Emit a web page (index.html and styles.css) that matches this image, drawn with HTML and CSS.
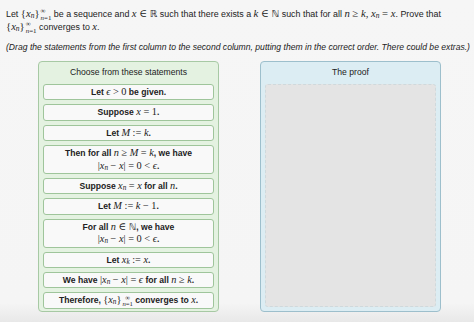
FILE: index.html
```html
<!DOCTYPE html>
<html>
<head lang="en">
    <meta charset="UTF-8">
    <title>Order the proof</title>
    <link rel="stylesheet" href="styles.css">
</head>
<body>
    <p class="question">
        Let <span class="m">{<i>x</i><sub>n</sub>}<span class="lim"><span>∞</span><span><i>n</i>=1</span></span></span> be a sequence and <span class="m"><i>x</i> ∈ <span class="bb">ℝ</span></span> such that there exists a <span class="m"><i>k</i> ∈ <span class="bb">ℕ</span></span> such that for all <span class="m"><i>n</i> ≥ <i>k</i>, <i>x</i><sub>n</sub> = <i>x</i></span>. Prove that<br>
        <span class="m">{<i>x</i><sub>n</sub>}<span class="lim"><span>∞</span><span><i>n</i>=1</span></span></span> converges to <span class="m"><i>x</i></span>.
    </p>
    <p class="hint">(Drag the statements from the first column to the second column, putting them in the correct order. There could be extras.)</p>

    <div class="columns">
        <div class="col col-source">
            <div class="col-title">Choose from these statements</div>
            <ul class="blocks">
                <li>Let <span class="m"><i>ϵ</i> &gt; 0</span> be given.</li>
                <li>Suppose <span class="m"><i>x</i> = 1</span>.</li>
                <li>Let <span class="m"><i>M</i> := <i>k</i></span>.</li>
                <li>Then for all <span class="m"><i>n</i> ≥ <i>M</i> = <i>k</i></span>, we have<br><span class="m">|<i>x</i><sub>n</sub> − <i>x</i>| = 0 &lt; <i>ϵ</i></span>.</li>
                <li>Suppose <span class="m"><i>x</i><sub>n</sub> = <i>x</i></span> for all <span class="m"><i>n</i></span>.</li>
                <li>Let <span class="m"><i>M</i> := <i>k</i> − 1</span>.</li>
                <li>For all <span class="m"><i>n</i> ∈ <span class="bb">ℕ</span></span>, we have<br><span class="m">|<i>x</i><sub>n</sub> − <i>x</i>| = 0 &lt; <i>ϵ</i></span>.</li>
                <li>Let <span class="m"><i>x</i><sub>k</sub> := <i>x</i></span>.</li>
                <li>We have <span class="m">|<i>x</i><sub>n</sub> − <i>x</i>| = <i>ϵ</i></span> for all <span class="m"><i>n</i> ≥ <i>k</i></span>.</li>
                <li>Therefore, <span class="m">{<i>x</i><sub>n</sub>}<span class="lim"><span>∞</span><span><i>n</i>=1</span></span></span> converges to <span class="m"><i>x</i></span>.</li>
            </ul>
        </div>
        <div class="col col-proof">
            <div class="col-title">The proof</div>
            <div class="dropzone"></div>
        </div>
    </div>
</body>
</html>
```

FILE: styles.css
```css
body,p,ul { margin: 0; padding: 0;}
html { background: #e8e8e8;}
body {
    font-family: "Liberation Sans", Arial, sans-serif;
    font-size: 8.6px;
    color: #222;
    padding: 8px 6px 0;
    height: 322px;
    box-sizing: border-box;
    overflow: hidden;
    background: linear-gradient(#f6f6f6 0, #f5f5f5 303px, #e8e8e8 322px);
}
li { list-style: none;}

.m {
    font-family: "Liberation Serif", "DejaVu Serif", serif;
    font-size: 1.2em;
    line-height: 1;
    white-space: nowrap;
    font-weight: normal;
}
.m i { font-style: italic;}
.m sub { font-size: 0.7em; font-style: italic; vertical-align: -0.2em; line-height: 0;}
.bb { font-family: "DejaVu Sans", sans-serif; font-size: 0.9em; line-height: 1;}
.lim {
    display: inline-flex;
    flex-direction: column;
    vertical-align: 0.55em;
    font-size: 0.65em;
    line-height: 0.95em;
    margin: -8px 0 -8px 1px;
}

.question { font-size: 8.9px; line-height: 13px;}
.hint { font-style: italic; font-size: 8.6px; line-height: 12px; margin: 7px -6px 0 0; white-space: nowrap;}

.columns {
    display: flex;
    gap: 41px;
    margin: 8px 0 0 32px;
}
.col {
    width: 181px;
    height: 251px;
    box-sizing: border-box;
    border: 1px solid #a7c9a4;
    border-radius: 4px;
    padding: 0 4px;
}
.col-source { background: #e4f2e1;}
.col-proof { background: #dcedf3; border-color: #9dbfcc;}
.col-title {
    text-align: center;
    height: 22px;
    line-height: 21px;
}
.blocks li {
    background: #f9f9f9;
    border: 1px solid #9fc59b;
    border-radius: 3px;
    text-align: center;
    font-weight: bold;
    line-height: 12.4px;
    padding: 1px 0;
    margin-bottom: 4px;
}
.dropzone {
    height: 223px;
    background: #e4e4e4;
    border: 1px dashed #cfd9dc;
    border-radius: 3px;
    box-sizing: border-box;
}
```
